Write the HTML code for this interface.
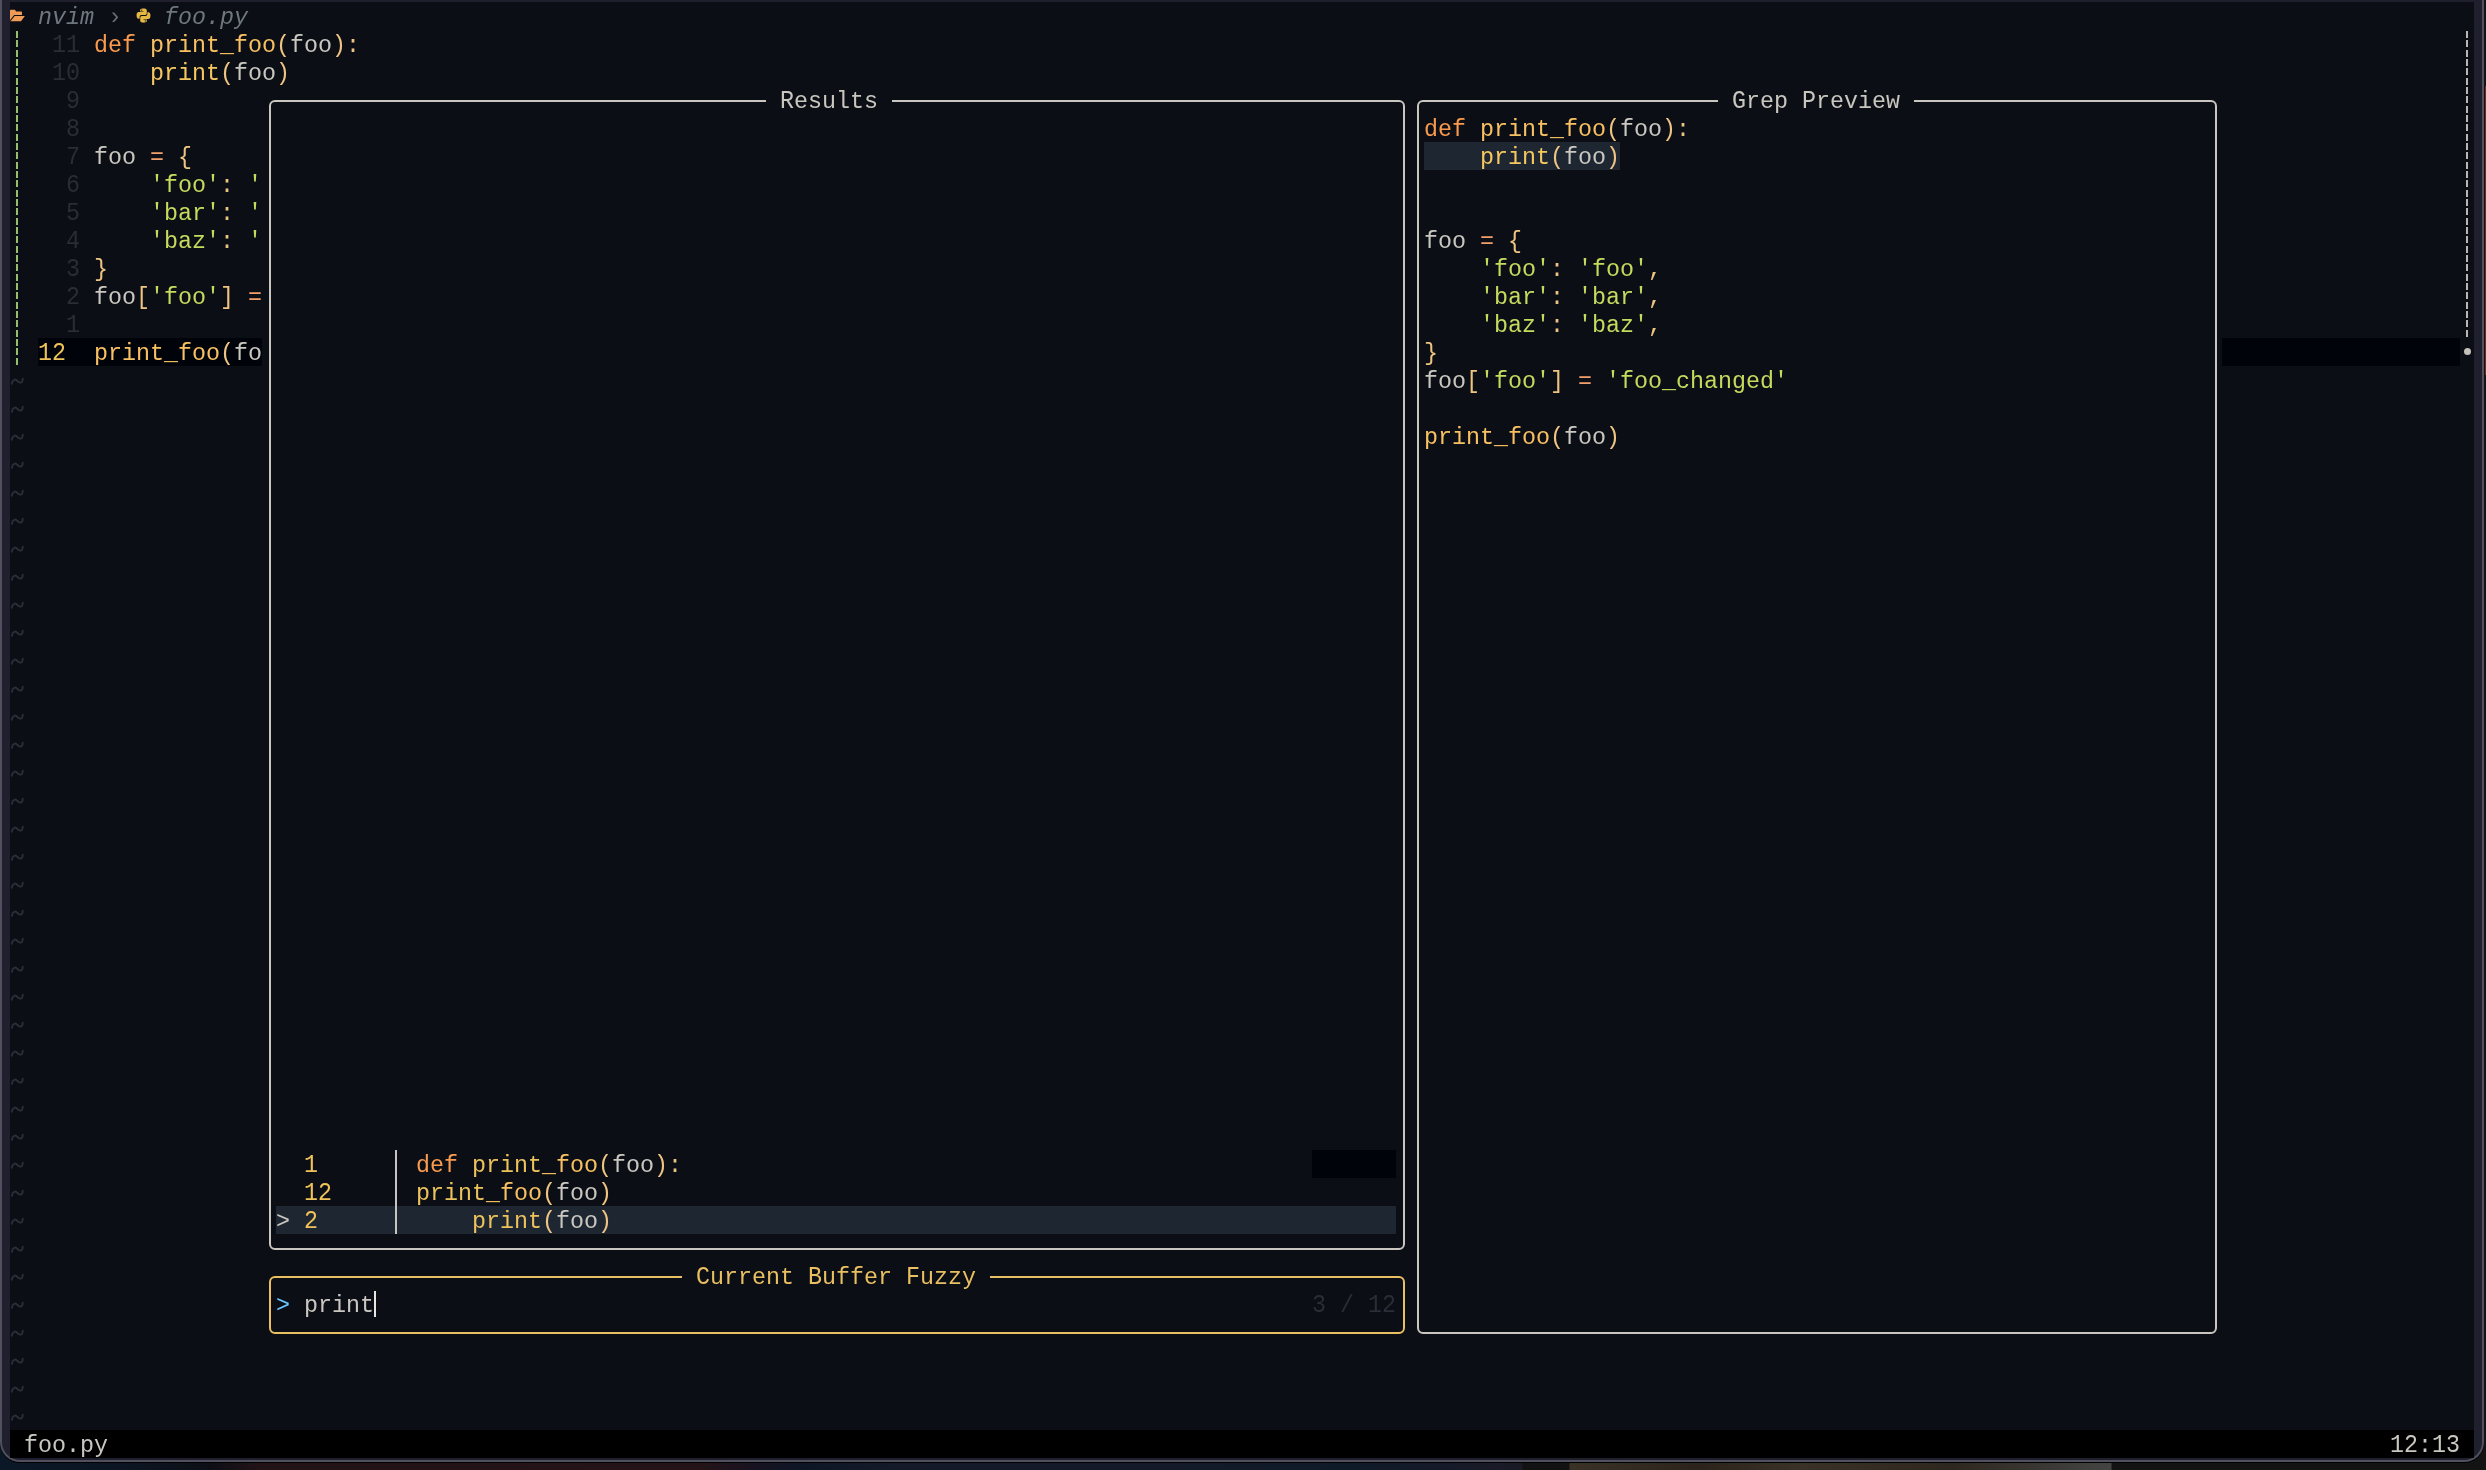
<!DOCTYPE html>
<html><head><meta charset="utf-8"><style>
html,body{margin:0;padding:0;}
body{width:2486px;height:1470px;overflow:hidden;position:relative;background:linear-gradient(90deg,#0b1828 0px,#0c1420 150px,#0d0f16 210px,#221317 260px,#241418 700px,#1a1220 745px,#0e1626 800px,#141a28 900px,#131a28 1200px,#0f1a28 1350px,#1a1a28 1500px,#181a24 1522px,#121212 1523px,#121212 1569px,#3a3226 1570px,#2c241c 1700px,#3a3226 1800px,#2e271f 1950px,#3f3f3c 2080px,#444442 2111px,#131313 2112px);}
.frame{position:absolute;left:0;top:-20px;width:2484px;height:1482px;background:#50505f;border-radius:20px;box-shadow:0 1px 0 #000;}
.frame2{position:absolute;left:2px;top:-20px;width:2480px;height:1480px;background:#1f1f2e;border-radius:18px;}
.term{position:absolute;left:10px;top:2px;width:2464px;height:1456px;background:#0b0e14;overflow:hidden;}
.t{position:absolute;white-space:pre;font-family:"Liberation Mono",monospace;font-size:23.33px;line-height:28px;height:28px;letter-spacing:0.0px;}
.r{position:absolute;}
.u{display:inline-block;transform:scaleY(1.11);transform-origin:50% 20px;}
.box{position:absolute;border:2px solid;border-radius:6px;}
</style></head><body>
<div class="frame"></div><div class="frame2"></div><div class="r" style="left:2485px;top:86px;width:1px;height:289px;background:#6e2a1c"></div>
<div class="r" style="left:10px;top:2px;width:2464px;height:1456px;background:#0b0e14"></div>
<div style="position:absolute;left:0;top:0;width:2486px;height:1470px;will-change:transform"><div class="t" style="left:38px;top:4px;color:#6e7680;font-style:italic;">nvim</div><div class="t" style="left:108px;top:4px;color:#646b75;">›</div><div class="t" style="left:164px;top:4px;color:#6e7680;font-style:italic;">foo.py</div><div class="r" style="left:38px;top:338px;width:224px;height:28px;background:#01030a;"></div><div class="r" style="left:2222px;top:338px;width:238px;height:28px;background:#01030a;"></div><div class="t" style="left:52px;top:32px;color:#292d37;"><span class="u">1</span><span class="u">1</span></div><div class="t" style="left:94px;top:32px;color:#f99a4e;">def</div><div class="t" style="left:150px;top:32px;color:#f8c062;">print_foo</div><div class="t" style="left:276px;top:32px;color:#eec482;">(</div><div class="t" style="left:290px;top:32px;color:#c9c7c0;">foo</div><div class="t" style="left:332px;top:32px;color:#eec482;">)</div><div class="t" style="left:346px;top:32px;color:#eec482;">:</div><div class="t" style="left:52px;top:60px;color:#292d37;"><span class="u">1</span><span class="u">0</span></div><div class="t" style="left:150px;top:60px;color:#f5c85f;">print</div><div class="t" style="left:220px;top:60px;color:#eec482;">(</div><div class="t" style="left:234px;top:60px;color:#c9c7c0;">foo</div><div class="t" style="left:276px;top:60px;color:#eec482;">)</div><div class="t" style="left:66px;top:88px;color:#292d37;"><span class="u">9</span></div><div class="t" style="left:66px;top:116px;color:#292d37;"><span class="u">8</span></div><div class="t" style="left:66px;top:144px;color:#292d37;"><span class="u">7</span></div><div class="t" style="left:94px;top:144px;color:#c9c7c0;">foo</div><div class="t" style="left:150px;top:144px;color:#f0a06c;">=</div><div class="t" style="left:178px;top:144px;color:#eec482;">{</div><div class="t" style="left:66px;top:172px;color:#292d37;"><span class="u">6</span></div><div class="t" style="left:150px;top:172px;color:#c6da5e;">&#x27;foo&#x27;</div><div class="t" style="left:220px;top:172px;color:#eec482;">:</div><div class="t" style="left:248px;top:172px;color:#c6da5e;">&#x27;</div><div class="t" style="left:66px;top:200px;color:#292d37;"><span class="u">5</span></div><div class="t" style="left:150px;top:200px;color:#c6da5e;">&#x27;bar&#x27;</div><div class="t" style="left:220px;top:200px;color:#eec482;">:</div><div class="t" style="left:248px;top:200px;color:#c6da5e;">&#x27;</div><div class="t" style="left:66px;top:228px;color:#292d37;"><span class="u">4</span></div><div class="t" style="left:150px;top:228px;color:#c6da5e;">&#x27;baz&#x27;</div><div class="t" style="left:220px;top:228px;color:#eec482;">:</div><div class="t" style="left:248px;top:228px;color:#c6da5e;">&#x27;</div><div class="t" style="left:66px;top:256px;color:#292d37;"><span class="u">3</span></div><div class="t" style="left:94px;top:256px;color:#eec482;">}</div><div class="t" style="left:66px;top:284px;color:#292d37;"><span class="u">2</span></div><div class="t" style="left:94px;top:284px;color:#c9c7c0;">foo</div><div class="t" style="left:136px;top:284px;color:#eec482;">[</div><div class="t" style="left:150px;top:284px;color:#c6da5e;">&#x27;foo&#x27;</div><div class="t" style="left:220px;top:284px;color:#eec482;">]</div><div class="t" style="left:248px;top:284px;color:#f0a06c;">=</div><div class="t" style="left:66px;top:312px;color:#292d37;"><span class="u">1</span></div><div class="t" style="left:38px;top:340px;color:#f0c35a;"><span class="u">1</span><span class="u">2</span></div><div class="t" style="left:94px;top:340px;color:#f8c062;">print_foo</div><div class="t" style="left:220px;top:340px;color:#eec482;">(</div><div class="t" style="left:234px;top:340px;color:#c9c7c0;">fo</div><div class="r" style="left:16px;top:31.0px;width:2px;height:7px;background:#96be6e;"></div><div class="r" style="left:16px;top:40.33px;width:2px;height:7px;background:#96be6e;"></div><div class="r" style="left:16px;top:49.66px;width:2px;height:7px;background:#96be6e;"></div><div class="r" style="left:16px;top:59.0px;width:2px;height:7px;background:#96be6e;"></div><div class="r" style="left:16px;top:68.33px;width:2px;height:7px;background:#96be6e;"></div><div class="r" style="left:16px;top:77.66px;width:2px;height:7px;background:#96be6e;"></div><div class="r" style="left:16px;top:87.0px;width:2px;height:7px;background:#96be6e;"></div><div class="r" style="left:16px;top:96.33px;width:2px;height:7px;background:#96be6e;"></div><div class="r" style="left:16px;top:105.66px;width:2px;height:7px;background:#96be6e;"></div><div class="r" style="left:16px;top:115.0px;width:2px;height:7px;background:#96be6e;"></div><div class="r" style="left:16px;top:124.33px;width:2px;height:7px;background:#96be6e;"></div><div class="r" style="left:16px;top:133.66px;width:2px;height:7px;background:#96be6e;"></div><div class="r" style="left:16px;top:143.0px;width:2px;height:7px;background:#96be6e;"></div><div class="r" style="left:16px;top:152.33px;width:2px;height:7px;background:#96be6e;"></div><div class="r" style="left:16px;top:161.66px;width:2px;height:7px;background:#96be6e;"></div><div class="r" style="left:16px;top:171.0px;width:2px;height:7px;background:#96be6e;"></div><div class="r" style="left:16px;top:180.33px;width:2px;height:7px;background:#96be6e;"></div><div class="r" style="left:16px;top:189.66px;width:2px;height:7px;background:#96be6e;"></div><div class="r" style="left:16px;top:199.0px;width:2px;height:7px;background:#96be6e;"></div><div class="r" style="left:16px;top:208.33px;width:2px;height:7px;background:#96be6e;"></div><div class="r" style="left:16px;top:217.66px;width:2px;height:7px;background:#96be6e;"></div><div class="r" style="left:16px;top:227.0px;width:2px;height:7px;background:#96be6e;"></div><div class="r" style="left:16px;top:236.33px;width:2px;height:7px;background:#96be6e;"></div><div class="r" style="left:16px;top:245.66px;width:2px;height:7px;background:#96be6e;"></div><div class="r" style="left:16px;top:255.0px;width:2px;height:7px;background:#96be6e;"></div><div class="r" style="left:16px;top:264.33px;width:2px;height:7px;background:#96be6e;"></div><div class="r" style="left:16px;top:273.66px;width:2px;height:7px;background:#96be6e;"></div><div class="r" style="left:16px;top:283.0px;width:2px;height:7px;background:#96be6e;"></div><div class="r" style="left:16px;top:292.33px;width:2px;height:7px;background:#96be6e;"></div><div class="r" style="left:16px;top:301.66px;width:2px;height:7px;background:#96be6e;"></div><div class="r" style="left:16px;top:311.0px;width:2px;height:7px;background:#96be6e;"></div><div class="r" style="left:16px;top:320.33px;width:2px;height:7px;background:#96be6e;"></div><div class="r" style="left:16px;top:329.66px;width:2px;height:7px;background:#96be6e;"></div><div class="r" style="left:16px;top:339.0px;width:2px;height:7px;background:#96be6e;"></div><div class="r" style="left:16px;top:348.33px;width:2px;height:7px;background:#96be6e;"></div><div class="r" style="left:16px;top:357.66px;width:2px;height:7px;background:#96be6e;"></div><div class="r" style="left:2466px;top:31.0px;width:2px;height:7px;background:#b9b7b0;"></div><div class="r" style="left:2466px;top:40.33px;width:2px;height:7px;background:#b9b7b0;"></div><div class="r" style="left:2466px;top:49.66px;width:2px;height:7px;background:#b9b7b0;"></div><div class="r" style="left:2466px;top:59.0px;width:2px;height:7px;background:#b9b7b0;"></div><div class="r" style="left:2466px;top:68.33px;width:2px;height:7px;background:#b9b7b0;"></div><div class="r" style="left:2466px;top:77.66px;width:2px;height:7px;background:#b9b7b0;"></div><div class="r" style="left:2466px;top:87.0px;width:2px;height:7px;background:#b9b7b0;"></div><div class="r" style="left:2466px;top:96.33px;width:2px;height:7px;background:#b9b7b0;"></div><div class="r" style="left:2466px;top:105.66px;width:2px;height:7px;background:#b9b7b0;"></div><div class="r" style="left:2466px;top:115.0px;width:2px;height:7px;background:#b9b7b0;"></div><div class="r" style="left:2466px;top:124.33px;width:2px;height:7px;background:#b9b7b0;"></div><div class="r" style="left:2466px;top:133.66px;width:2px;height:7px;background:#b9b7b0;"></div><div class="r" style="left:2466px;top:143.0px;width:2px;height:7px;background:#b9b7b0;"></div><div class="r" style="left:2466px;top:152.33px;width:2px;height:7px;background:#b9b7b0;"></div><div class="r" style="left:2466px;top:161.66px;width:2px;height:7px;background:#b9b7b0;"></div><div class="r" style="left:2466px;top:171.0px;width:2px;height:7px;background:#b9b7b0;"></div><div class="r" style="left:2466px;top:180.33px;width:2px;height:7px;background:#b9b7b0;"></div><div class="r" style="left:2466px;top:189.66px;width:2px;height:7px;background:#b9b7b0;"></div><div class="r" style="left:2466px;top:199.0px;width:2px;height:7px;background:#b9b7b0;"></div><div class="r" style="left:2466px;top:208.33px;width:2px;height:7px;background:#b9b7b0;"></div><div class="r" style="left:2466px;top:217.66px;width:2px;height:7px;background:#b9b7b0;"></div><div class="r" style="left:2466px;top:227.0px;width:2px;height:7px;background:#b9b7b0;"></div><div class="r" style="left:2466px;top:236.33px;width:2px;height:7px;background:#b9b7b0;"></div><div class="r" style="left:2466px;top:245.66px;width:2px;height:7px;background:#b9b7b0;"></div><div class="r" style="left:2466px;top:255.0px;width:2px;height:7px;background:#b9b7b0;"></div><div class="r" style="left:2466px;top:264.33px;width:2px;height:7px;background:#b9b7b0;"></div><div class="r" style="left:2466px;top:273.66px;width:2px;height:7px;background:#b9b7b0;"></div><div class="r" style="left:2466px;top:283.0px;width:2px;height:7px;background:#b9b7b0;"></div><div class="r" style="left:2466px;top:292.33px;width:2px;height:7px;background:#b9b7b0;"></div><div class="r" style="left:2466px;top:301.66px;width:2px;height:7px;background:#b9b7b0;"></div><div class="r" style="left:2466px;top:311.0px;width:2px;height:7px;background:#b9b7b0;"></div><div class="r" style="left:2466px;top:320.33px;width:2px;height:7px;background:#b9b7b0;"></div><div class="r" style="left:2466px;top:329.66px;width:2px;height:7px;background:#b9b7b0;"></div><div class="r" style="left:2464px;top:348px;width:7px;height:7px;border-radius:50%;background:#c4c2bb"></div><svg class="r" style="left:0;top:0" width="2486" height="1470"><g fill="none" stroke="#2a2e38" stroke-width="1.9" stroke-linecap="round"><path transform="translate(10,366)" d="M1.8 17.8 C2.3 13.6 5.4 12.4 7.4 14.9 C9.4 17.4 12.6 17.6 12.8 12.8"/><path transform="translate(10,394)" d="M1.8 17.8 C2.3 13.6 5.4 12.4 7.4 14.9 C9.4 17.4 12.6 17.6 12.8 12.8"/><path transform="translate(10,422)" d="M1.8 17.8 C2.3 13.6 5.4 12.4 7.4 14.9 C9.4 17.4 12.6 17.6 12.8 12.8"/><path transform="translate(10,450)" d="M1.8 17.8 C2.3 13.6 5.4 12.4 7.4 14.9 C9.4 17.4 12.6 17.6 12.8 12.8"/><path transform="translate(10,478)" d="M1.8 17.8 C2.3 13.6 5.4 12.4 7.4 14.9 C9.4 17.4 12.6 17.6 12.8 12.8"/><path transform="translate(10,506)" d="M1.8 17.8 C2.3 13.6 5.4 12.4 7.4 14.9 C9.4 17.4 12.6 17.6 12.8 12.8"/><path transform="translate(10,534)" d="M1.8 17.8 C2.3 13.6 5.4 12.4 7.4 14.9 C9.4 17.4 12.6 17.6 12.8 12.8"/><path transform="translate(10,562)" d="M1.8 17.8 C2.3 13.6 5.4 12.4 7.4 14.9 C9.4 17.4 12.6 17.6 12.8 12.8"/><path transform="translate(10,590)" d="M1.8 17.8 C2.3 13.6 5.4 12.4 7.4 14.9 C9.4 17.4 12.6 17.6 12.8 12.8"/><path transform="translate(10,618)" d="M1.8 17.8 C2.3 13.6 5.4 12.4 7.4 14.9 C9.4 17.4 12.6 17.6 12.8 12.8"/><path transform="translate(10,646)" d="M1.8 17.8 C2.3 13.6 5.4 12.4 7.4 14.9 C9.4 17.4 12.6 17.6 12.8 12.8"/><path transform="translate(10,674)" d="M1.8 17.8 C2.3 13.6 5.4 12.4 7.4 14.9 C9.4 17.4 12.6 17.6 12.8 12.8"/><path transform="translate(10,702)" d="M1.8 17.8 C2.3 13.6 5.4 12.4 7.4 14.9 C9.4 17.4 12.6 17.6 12.8 12.8"/><path transform="translate(10,730)" d="M1.8 17.8 C2.3 13.6 5.4 12.4 7.4 14.9 C9.4 17.4 12.6 17.6 12.8 12.8"/><path transform="translate(10,758)" d="M1.8 17.8 C2.3 13.6 5.4 12.4 7.4 14.9 C9.4 17.4 12.6 17.6 12.8 12.8"/><path transform="translate(10,786)" d="M1.8 17.8 C2.3 13.6 5.4 12.4 7.4 14.9 C9.4 17.4 12.6 17.6 12.8 12.8"/><path transform="translate(10,814)" d="M1.8 17.8 C2.3 13.6 5.4 12.4 7.4 14.9 C9.4 17.4 12.6 17.6 12.8 12.8"/><path transform="translate(10,842)" d="M1.8 17.8 C2.3 13.6 5.4 12.4 7.4 14.9 C9.4 17.4 12.6 17.6 12.8 12.8"/><path transform="translate(10,870)" d="M1.8 17.8 C2.3 13.6 5.4 12.4 7.4 14.9 C9.4 17.4 12.6 17.6 12.8 12.8"/><path transform="translate(10,898)" d="M1.8 17.8 C2.3 13.6 5.4 12.4 7.4 14.9 C9.4 17.4 12.6 17.6 12.8 12.8"/><path transform="translate(10,926)" d="M1.8 17.8 C2.3 13.6 5.4 12.4 7.4 14.9 C9.4 17.4 12.6 17.6 12.8 12.8"/><path transform="translate(10,954)" d="M1.8 17.8 C2.3 13.6 5.4 12.4 7.4 14.9 C9.4 17.4 12.6 17.6 12.8 12.8"/><path transform="translate(10,982)" d="M1.8 17.8 C2.3 13.6 5.4 12.4 7.4 14.9 C9.4 17.4 12.6 17.6 12.8 12.8"/><path transform="translate(10,1010)" d="M1.8 17.8 C2.3 13.6 5.4 12.4 7.4 14.9 C9.4 17.4 12.6 17.6 12.8 12.8"/><path transform="translate(10,1038)" d="M1.8 17.8 C2.3 13.6 5.4 12.4 7.4 14.9 C9.4 17.4 12.6 17.6 12.8 12.8"/><path transform="translate(10,1066)" d="M1.8 17.8 C2.3 13.6 5.4 12.4 7.4 14.9 C9.4 17.4 12.6 17.6 12.8 12.8"/><path transform="translate(10,1094)" d="M1.8 17.8 C2.3 13.6 5.4 12.4 7.4 14.9 C9.4 17.4 12.6 17.6 12.8 12.8"/><path transform="translate(10,1122)" d="M1.8 17.8 C2.3 13.6 5.4 12.4 7.4 14.9 C9.4 17.4 12.6 17.6 12.8 12.8"/><path transform="translate(10,1150)" d="M1.8 17.8 C2.3 13.6 5.4 12.4 7.4 14.9 C9.4 17.4 12.6 17.6 12.8 12.8"/><path transform="translate(10,1178)" d="M1.8 17.8 C2.3 13.6 5.4 12.4 7.4 14.9 C9.4 17.4 12.6 17.6 12.8 12.8"/><path transform="translate(10,1206)" d="M1.8 17.8 C2.3 13.6 5.4 12.4 7.4 14.9 C9.4 17.4 12.6 17.6 12.8 12.8"/><path transform="translate(10,1234)" d="M1.8 17.8 C2.3 13.6 5.4 12.4 7.4 14.9 C9.4 17.4 12.6 17.6 12.8 12.8"/><path transform="translate(10,1262)" d="M1.8 17.8 C2.3 13.6 5.4 12.4 7.4 14.9 C9.4 17.4 12.6 17.6 12.8 12.8"/><path transform="translate(10,1290)" d="M1.8 17.8 C2.3 13.6 5.4 12.4 7.4 14.9 C9.4 17.4 12.6 17.6 12.8 12.8"/><path transform="translate(10,1318)" d="M1.8 17.8 C2.3 13.6 5.4 12.4 7.4 14.9 C9.4 17.4 12.6 17.6 12.8 12.8"/><path transform="translate(10,1346)" d="M1.8 17.8 C2.3 13.6 5.4 12.4 7.4 14.9 C9.4 17.4 12.6 17.6 12.8 12.8"/><path transform="translate(10,1374)" d="M1.8 17.8 C2.3 13.6 5.4 12.4 7.4 14.9 C9.4 17.4 12.6 17.6 12.8 12.8"/><path transform="translate(10,1402)" d="M1.8 17.8 C2.3 13.6 5.4 12.4 7.4 14.9 C9.4 17.4 12.6 17.6 12.8 12.8"/></g></svg><div class="r" style="left:10px;top:1430px;width:2464px;height:28px;background:#000000;"></div><div class="t" style="left:24px;top:1432px;color:#c9c7c0;">foo.py</div><div class="t" style="left:2390px;top:1432px;color:#c9c7c0;"><span class="u">1</span><span class="u">2</span>:<span class="u">1</span><span class="u">3</span></div><div class="r" style="left:262px;top:86px;width:1148px;height:1176px;background:#0b0e14;"></div><div class="box" style="left:269px;top:100px;width:1132px;height:1146px;border-color:#c8c6bf"></div><div class="r" style="left:766px;top:96px;width:126px;height:10px;background:#0b0e14;"></div><div class="t" style="left:766px;top:88px;color:#c8c6bf;"> <span class="u">R</span>esults </div><div class="r" style="left:1312px;top:1150px;width:84px;height:28px;background:#01030a;"></div><div class="r" style="left:276px;top:1206px;width:1120px;height:28px;background:#1e2632;"></div><div class="t" style="left:304px;top:1152px;color:#f0c35a;"><span class="u">1</span></div><div class="t" style="left:416px;top:1152px;color:#f99a4e;">def</div><div class="t" style="left:472px;top:1152px;color:#ecc25c;">print</div><div class="t" style="left:542px;top:1152px;color:#f8c062;">_foo</div><div class="t" style="left:598px;top:1152px;color:#eec482;">(</div><div class="t" style="left:612px;top:1152px;color:#c9c7c0;">foo</div><div class="t" style="left:654px;top:1152px;color:#eec482;">)</div><div class="t" style="left:668px;top:1152px;color:#eec482;">:</div><div class="t" style="left:304px;top:1180px;color:#f0c35a;"><span class="u">1</span><span class="u">2</span></div><div class="t" style="left:416px;top:1180px;color:#ecc25c;">print</div><div class="t" style="left:486px;top:1180px;color:#f8c062;">_foo</div><div class="t" style="left:542px;top:1180px;color:#eec482;">(</div><div class="t" style="left:556px;top:1180px;color:#c9c7c0;">foo</div><div class="t" style="left:598px;top:1180px;color:#eec482;">)</div><div class="t" style="left:276px;top:1208px;color:#c9c7c0;">&gt;</div><div class="t" style="left:304px;top:1208px;color:#f0c35a;"><span class="u">2</span></div><div class="t" style="left:472px;top:1208px;color:#ecc25c;">print</div><div class="t" style="left:542px;top:1208px;color:#eec482;">(</div><div class="t" style="left:556px;top:1208px;color:#c9c7c0;">foo</div><div class="t" style="left:598px;top:1208px;color:#eec482;">)</div><div class="r" style="left:395px;top:1150px;width:2px;height:84px;background:#c6c4bc;"></div><div class="r" style="left:262px;top:1262px;width:1148px;height:84px;background:#0b0e14;"></div><div class="box" style="left:269px;top:1276px;width:1132px;height:54px;border-color:#eabf62"></div><div class="r" style="left:682px;top:1272px;width:308px;height:10px;background:#0b0e14;"></div><div class="t" style="left:682px;top:1264px;color:#eabf62;"> <span class="u">C</span>urrent <span class="u">B</span>uffer <span class="u">F</span>uzzy </div><div class="t" style="left:276px;top:1292px;color:#6ec3ff;">&gt;</div><div class="t" style="left:304px;top:1292px;color:#c9c7c0;">print</div><div class="r" style="left:374px;top:1291px;width:2px;height:26px;background:#e8e6e0;"></div><div class="t" style="left:1312px;top:1292px;color:#292d37;"><span class="u">3</span> / <span class="u">1</span><span class="u">2</span></div><div class="r" style="left:1410px;top:86px;width:812px;height:1260px;background:#0b0e14;"></div><div class="box" style="left:1417px;top:100px;width:796px;height:1230px;border-color:#c8c6bf"></div><div class="r" style="left:1718px;top:96px;width:196px;height:10px;background:#0b0e14;"></div><div class="t" style="left:1718px;top:88px;color:#c8c6bf;"> <span class="u">G</span>rep <span class="u">P</span>review </div><div class="r" style="left:1424px;top:142px;width:196px;height:28px;background:#1e2632;"></div><div class="t" style="left:1424px;top:116px;color:#f99a4e;">def</div><div class="t" style="left:1480px;top:116px;color:#f8c062;">print_foo</div><div class="t" style="left:1606px;top:116px;color:#eec482;">(</div><div class="t" style="left:1620px;top:116px;color:#c9c7c0;">foo</div><div class="t" style="left:1662px;top:116px;color:#eec482;">)</div><div class="t" style="left:1676px;top:116px;color:#eec482;">:</div><div class="t" style="left:1480px;top:144px;color:#f5c85f;">print</div><div class="t" style="left:1550px;top:144px;color:#eec482;">(</div><div class="t" style="left:1564px;top:144px;color:#c9c7c0;">foo</div><div class="t" style="left:1606px;top:144px;color:#eec482;">)</div><div class="t" style="left:1424px;top:228px;color:#c9c7c0;">foo</div><div class="t" style="left:1480px;top:228px;color:#f0a06c;">=</div><div class="t" style="left:1508px;top:228px;color:#eec482;">{</div><div class="t" style="left:1480px;top:256px;color:#c6da5e;">&#x27;foo&#x27;</div><div class="t" style="left:1550px;top:256px;color:#eec482;">:</div><div class="t" style="left:1578px;top:256px;color:#c6da5e;">&#x27;foo&#x27;</div><div class="t" style="left:1648px;top:256px;color:#eec482;">,</div><div class="t" style="left:1480px;top:284px;color:#c6da5e;">&#x27;bar&#x27;</div><div class="t" style="left:1550px;top:284px;color:#eec482;">:</div><div class="t" style="left:1578px;top:284px;color:#c6da5e;">&#x27;bar&#x27;</div><div class="t" style="left:1648px;top:284px;color:#eec482;">,</div><div class="t" style="left:1480px;top:312px;color:#c6da5e;">&#x27;baz&#x27;</div><div class="t" style="left:1550px;top:312px;color:#eec482;">:</div><div class="t" style="left:1578px;top:312px;color:#c6da5e;">&#x27;baz&#x27;</div><div class="t" style="left:1648px;top:312px;color:#eec482;">,</div><div class="t" style="left:1424px;top:340px;color:#eec482;">}</div><div class="t" style="left:1424px;top:368px;color:#c9c7c0;">foo</div><div class="t" style="left:1466px;top:368px;color:#eec482;">[</div><div class="t" style="left:1480px;top:368px;color:#c6da5e;">&#x27;foo&#x27;</div><div class="t" style="left:1550px;top:368px;color:#eec482;">]</div><div class="t" style="left:1578px;top:368px;color:#f0a06c;">=</div><div class="t" style="left:1606px;top:368px;color:#c6da5e;">&#x27;foo_changed&#x27;</div><div class="t" style="left:1424px;top:424px;color:#f8c062;">print_foo</div><div class="t" style="left:1550px;top:424px;color:#eec482;">(</div><div class="t" style="left:1564px;top:424px;color:#c9c7c0;">foo</div><div class="t" style="left:1606px;top:424px;color:#eec482;">)</div><svg class="r" style="left:0;top:0" width="30" height="26" viewBox="0 0 30 26"><path d="M10 10.6 Q10 9.8 10.8 9.8 L15 9.8 L16.1 11.6 L21.2 11.6 Q22 11.6 22 12.4 L22 14.9 L14.1 14.9 L10 20.2 Z" fill="#ef9a55"/><path d="M14.7 15.9 L24.9 15.9 L21 21.2 L10.4 21.2 Z" fill="#ef9a55"/></svg><svg class="r" style="left:136px;top:8px" width="15" height="15" viewBox="0 0 16 16"><path d="M7.9 0.5c-3.7 0-3.5 1.6-3.5 1.6v1.7h3.6v.5H3c0 0-2.4-.3-2.4 3.5s2.1 3.6 2.1 3.6h1.2V9.6s-.1-2.1 2.1-2.1h3.5s2 0 2-2V2.4S11.8.5 7.9.5zM6 1.6a.65.65 0 1 1 0 1.3.65.65 0 0 1 0-1.3z" fill="#e5b843"/><path d="M8.1 15.5c3.7 0 3.5-1.6 3.5-1.6v-1.7H8v-.5h5c0 0 2.4.3 2.4-3.5s-2.1-3.6-2.1-3.6h-1.2v1.8s.1 2.1-2.1 2.1H6.5s-2 0-2 2v3.2s-.3 1.9 3.6 1.9zm1.9-1.1a.65.65 0 1 1 0-1.3.65.65 0 0 1 0 1.3z" fill="#e5b843"/></svg></div>
</body></html>
